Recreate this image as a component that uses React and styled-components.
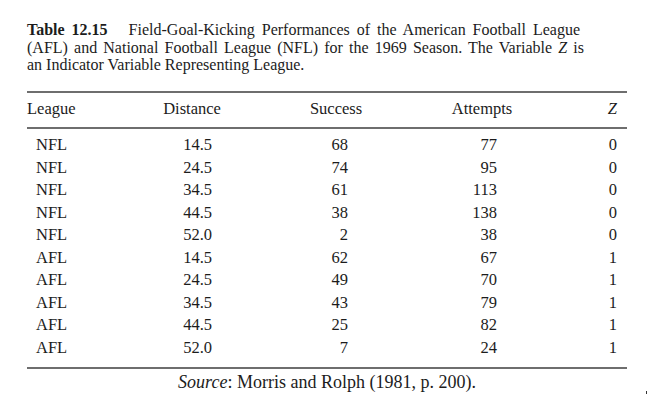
import React from "react";
import styled, { createGlobalStyle } from "styled-components";

const Global = createGlobalStyle`
  html, body { margin: 0; padding: 0; background: #ffffff; }
  body { font-family: "Liberation Serif", "Times New Roman", serif; color: #1c1c1c; }
`;

const Page = styled.div`
  position: relative;
  width: 661px;
  height: 406px;
  padding: 21px 0 0 27px;
  box-sizing: border-box;
  overflow: hidden;
`;

const Caption = styled.div`
  width: 600px;
  font-size: 16px;
  line-height: 17.5px;
`;

const CaptionLine = styled.span`
  display: block;
  width: ${(p) => (p.$w ? `${p.$w}px` : "auto")};
  white-space: nowrap;
  text-align: ${(p) => (p.$w ? "justify" : "left")};
  text-align-last: ${(p) => (p.$w ? "justify" : "auto")};
`;

const Label = styled.b`
  font-weight: bold;
  margin-right: 21px;
`;

const Table = styled.div`
  width: 600px;
  margin-top: 17px;
  border-top: 2px solid #6e6e6e;
  border-bottom: 2px solid #6e6e6e;
  font-size: 16.5px;
`;

const Grid = styled.div`
  display: grid;
  grid-template-columns: 110px 110px 178px 114px 88px;
  grid-auto-rows: 22.5px;
  line-height: 22.5px;
  padding: ${(p) => p.$pad};
  border-bottom: ${(p) => (p.$rule ? "2px solid #6e6e6e" : "none")};
`;

const Head = styled.div`
  text-align: ${(p) => p.$align || "center"};
  padding-right: ${(p) => p.$pr || 0}px;
  white-space: nowrap;
`;

const Cell = styled.div`
  text-align: ${(p) => p.$align || "right"};
  padding-right: ${(p) => p.$pr || 0}px;
  padding-left: ${(p) => p.$pl || 0}px;
  white-space: nowrap;
`;

const Source = styled.div`
  width: 600px;
  margin-top: 3px;
  text-align: center;
  font-size: 18px;
  line-height: 20px;
`;

const Tick = styled.span`
  position: absolute;
  left: 646px;
  top: 391px;
  width: 1px;
  height: 3px;
  background: #333;
`;

const rows = [
  ["NFL", "14.5", "68", "77", "0"],
  ["NFL", "24.5", "74", "95", "0"],
  ["NFL", "34.5", "61", "113", "0"],
  ["NFL", "44.5", "38", "138", "0"],
  ["NFL", "52.0", "2", "38", "0"],
  ["AFL", "14.5", "62", "67", "1"],
  ["AFL", "24.5", "49", "70", "1"],
  ["AFL", "34.5", "43", "79", "1"],
  ["AFL", "44.5", "25", "82", "1"],
  ["AFL", "52.0", "7", "24", "1"],
];

export default function App() {
  return (
    <>
      <Global />
      <Page>
        <Caption>
          <CaptionLine $w={553}>
            <Label>Table 12.15</Label>Field-Goal-Kicking Performances of the American Football League
          </CaptionLine>
          <CaptionLine $w={557}>
            (AFL) and National Football League (NFL) for the 1969 Season. The Variable <i>Z</i> is
          </CaptionLine>
          <CaptionLine>an Indicator Variable Representing League.</CaptionLine>
        </Caption>
        <Table>
          <Grid $pad="5.3px 0 7.2px 0" $rule>
            <Head $align="left">League</Head>
            <Head>Distance</Head>
            <Head>Success</Head>
            <Head>Attempts</Head>
            <Head $align="right" $pr={10}>
              <i>Z</i>
            </Head>
          </Grid>
          <Grid $pad="4.8px 0 8.2px 0">
            {rows.map((r, i) => (
              <React.Fragment key={i}>
                <Cell $align="left" $pl={9}>{r[0]}</Cell>
                <Cell $pr={35}>{r[1]}</Cell>
                <Cell $pr={77}>{r[2]}</Cell>
                <Cell $pr={42}>{r[3]}</Cell>
                <Cell $pr={10}>{r[4]}</Cell>
              </React.Fragment>
            ))}
          </Grid>
        </Table>
        <Source>
          <i>Source</i>: Morris and Rolph (1981, p. 200).
        </Source>
        <Tick />
      </Page>
    </>
  );
}
